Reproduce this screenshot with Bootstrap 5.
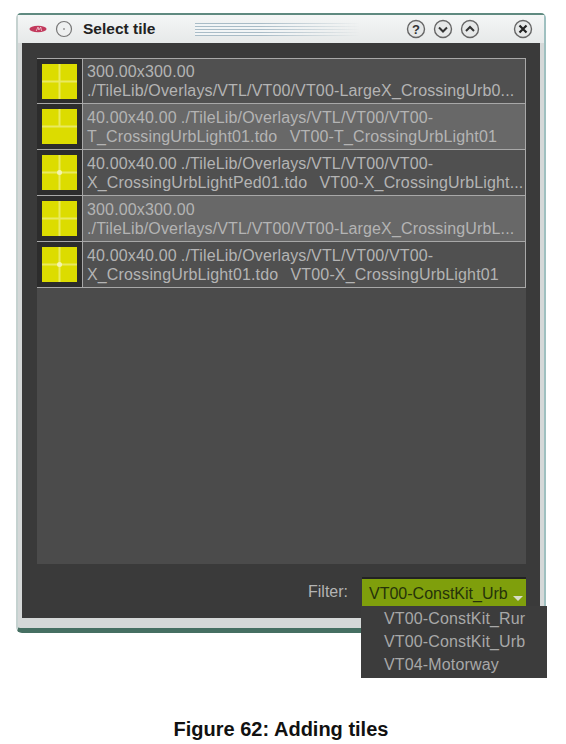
<!DOCTYPE html>
<html lang="en">
<head>
  <meta charset="UTF-8">
  <meta name="viewport" content="width=device-width, initial-scale=1.0">
  <title>Select tile</title>
  <link href="https://cdn.jsdelivr.net/npm/bootstrap@5.3.0/dist/css/bootstrap.min.css" rel="stylesheet">
  <style>
    body {
      background: #fff;
      font-family: "Liberation Sans", Arial, sans-serif;
      padding: 13px 20px 0 16px;
    }

    .tile-window {
      width: 530px;
      height: 620px;
      background: #d5d8d8;
      border-top: 2px solid #5f8a80;
      border-right: 2px solid #9fc0c0;
      border-bottom: 5px solid #466f62;
      border-left: 2px solid #c5d2d0;
      border-radius: 5px 5px 6px 6px;
    }

    .title-row {
      height: 28px;
      padding: 0 11px 0 11px;
      background: linear-gradient(#f4f6f6, #e6e9e9);
    }

    .title-text {
      font-size: 15.5px;
      font-weight: 700;
      color: #222;
      margin-left: 10px;
      width: 112px;
    }

    .title-lines {
      height: 13px;
      width: 165px;
      background: repeating-linear-gradient(#a9bcc7 0 1px, #f2f5f6 1px 3px);
      -webkit-mask-image: linear-gradient(to right, #000 40%, transparent);
      mask-image: linear-gradient(to right, #000 40%, transparent);
    }

    .tool-btns { gap: 7px; margin-right: 33px; }

    .tile-body {
      height: 575px;
      margin: 0 4px 0 4px;
      background: #3a3a3a;
      padding: 15px 14px 0 15px;
    }

    .tile-panel {
      height: 506px;
      background: #4b4b4b;
    }

    .tile-row {
      height: 46px;
      border-bottom: 1px solid #a8a8a8;
    }

    .tile-row:first-child { border-top: 1px solid #a8a8a8; }

    .tile-thumb {
      width: 45px;
      flex: none;
      background: #2c2c2c;
      padding: 5px;
    }

    .tile-text {
      flex: 1;
      min-width: 0;
      border-left: 1px solid #a8a8a8;
      border-right: 1px solid #a8a8a8;
      background: #505050;
      color: #b4b4b4;
      font-size: 16px;
      letter-spacing: .15px;
      word-spacing: -.5px;
      line-height: 18.5px;
      padding: 5px 0 0 4px;
      white-space: nowrap;
      overflow: hidden;
    }

    .tile-row:first-child .tile-text { padding-top: 4px; }

    .tile-row.shaded .tile-text { background: #686868; }

    .filter-row {
      height: 54px;
      padding-top: 13px;
      color: #b4b4b4;
      font-size: 16px;
    }

    .filter-label { padding-top: 3px; }

    .filter-box {
      position: relative;
      width: 164px;
      height: 29px;
      margin-left: 14px;
      background: #7f9f0c;
      border-top: 2px solid #222;
      color: #26330a;
      padding: 5px 0 0 7px;
      white-space: nowrap;
      line-height: 20px;
    }

    .filter-arrow {
      position: absolute;
      right: 3px;
      bottom: 5px;
      width: 0;
      height: 0;
      border-left: 5px solid transparent;
      border-right: 5px solid transparent;
      border-top: 5px solid #d8dcc8;
    }

    .filter-menu {
      position: absolute;
      top: 27px;
      left: -1px;
      width: 186px;
      height: 72px;
      background: #3c3c3c;
      color: #a8a8a8;
      letter-spacing: .15px;
      padding: 1px 0 0 23px;
      line-height: 23px;
      z-index: 5;
    }

    .figure-caption-text {
      margin-top: 81px;
      font-size: 20px;
      font-weight: 700;
      color: #111;
      text-align: center;
      width: 530px;
    }
  </style>
</head>
<body>

<div class="tile-window">
  <div class="title-row d-flex align-items-center">
    <svg width="18" height="8" viewBox="0 0 20 8" preserveAspectRatio="none"><ellipse cx="10" cy="4" rx="9.5" ry="3.2" fill="#c2395c"/><path d="M8 6 10 2 11 5 13 2 14 6" fill="none" stroke="#f3d5dc" stroke-width=".8"/></svg>
    <svg class="ms-2" width="18" height="18" viewBox="0 0 18 18"><circle cx="9" cy="9" r="7.5" fill="#eef0f0" stroke="#777" stroke-width="1.2"/><circle cx="9" cy="9" r="1" fill="#999"/></svg>
    <span class="title-text">Select tile</span>
    <div class="title-lines"></div>
    <div class="flex-grow-1"></div>
    <div class="tool-btns d-flex">
      <svg width="20" height="20" viewBox="0 0 20 20"><circle cx="10" cy="10" r="8.5" fill="#e6e8e8" stroke="#666" stroke-width="1.4"/><text x="10" y="14.5" font-size="13" font-weight="700" text-anchor="middle" fill="#333" font-family="Liberation Sans">?</text></svg>
      <svg width="20" height="20" viewBox="0 0 20 20"><circle cx="10" cy="10" r="8.5" fill="#e6e8e8" stroke="#666" stroke-width="1.4"/><path d="M6 8.500 10 12.500 14 8.500" fill="none" stroke="#333" stroke-width="2"/></svg>
      <svg width="20" height="20" viewBox="0 0 20 20"><circle cx="10" cy="10" r="8.500" fill="#e6e8e8" stroke="#666" stroke-width="1.4"/><path d="M6 12 10 8 14 12" fill="none" stroke="#333" stroke-width="2"/></svg>
    </div>
    <svg width="20" height="20" viewBox="0 0 20 20"><circle cx="10" cy="10" r="8.500" fill="#e6e8e8" stroke="#666" stroke-width="1.4"/><path d="M6.500 6.500 13.500 13.500M13.500 6.500 6.500 13.500" stroke="#222" stroke-width="2.2"/></svg>
  </div>

  <div class="tile-body">
    <div class="tile-panel" id="tilePanel"></div>
    <div class="filter-row d-flex justify-content-end">
      <span class="filter-label">Filter:</span>
      <div class="filter-box">VT00-ConstKit_Urb<span class="filter-arrow"></span>
        <div class="filter-menu">
          <div>VT00-ConstKit_Rur</div>
          <div>VT00-ConstKit_Urb</div>
          <div>VT04-Motorway</div>
        </div>
      </div>
    </div>
  </div>
</div>

<div class="figure-caption-text">Figure 62: Adding tiles</div>

<script>
  const tiles = [
    { l1: '300.00x300.00', l2: './TileLib/Overlays/VTL/VT00/VT00-LargeX_CrossingUrb0...', kind: 'x' },
    { l1: '40.00x40.00 ./TileLib/Overlays/VTL/VT00/VT00-', l2: 'T_CrossingUrbLight01.tdo &nbsp; VT00-T_CrossingUrbLight01', kind: 't', shaded: true },
    { l1: '40.00x40.00 ./TileLib/Overlays/VTL/VT00/VT00-', l2: 'X_CrossingUrbLightPed01.tdo &nbsp; VT00-X_CrossingUrbLight...', kind: 'p' },
    { l1: '300.00x300.00', l2: './TileLib/Overlays/VTL/VT00/VT00-LargeX_CrossingUrbL...', kind: 'x', shaded: true },
    { l1: '40.00x40.00 ./TileLib/Overlays/VTL/VT00/VT00-', l2: 'X_CrossingUrbLight01.tdo &nbsp; VT00-X_CrossingUrbLight01', kind: 'p' }
  ];

  // T crossing: the vertical line stops at the centre
  function thumb(kind) {
    const vert = kind === 't' ? 'M17.500 0V17' : 'M17.500 0V35';
    const glow = kind === 'p' ? '<circle cx="17.500" cy="17.500" r="2.500" fill="#f4f4b0"/>' : '';
    return `<svg width="35" height="35" viewBox="0 0 35 35"><rect width="35" height="35" fill="#dcdc00"/><path d="M0 17.500H35${vert}" stroke="#e9e960" stroke-width="2" fill="none"/>${glow}</svg>`;
  }

  const panel = document.getElementById('tilePanel');
  tiles.forEach(t => {
    const row = document.createElement('div');
    row.className = 'tile-row d-flex' + (t.shaded ? ' shaded' : '');
    row.innerHTML = `<div class="tile-thumb">${thumb(t.kind)}</div><div class="tile-text">${t.l1}<br>${t.l2}</div>`;
    panel.appendChild(row);
  });
</script>

<script src="https://cdn.jsdelivr.net/npm/bootstrap@5.3.0/dist/js/bootstrap.bundle.min.js"></script>
</body>
</html>
